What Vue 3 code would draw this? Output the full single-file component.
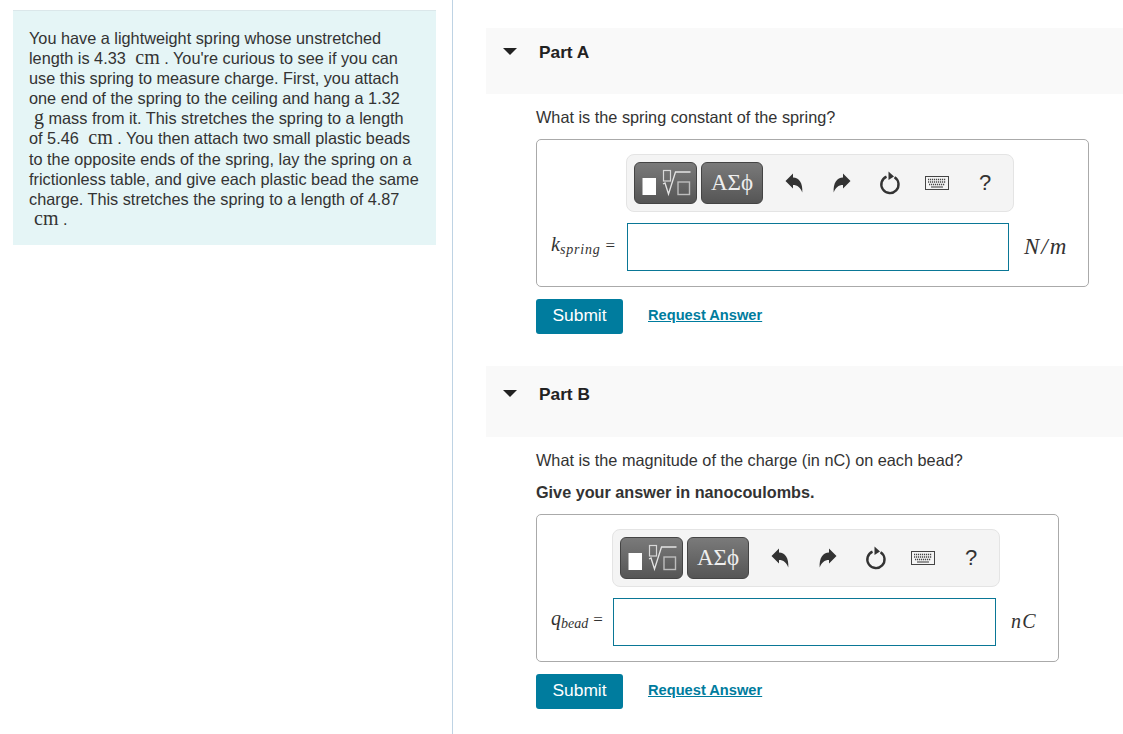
<script setup>
const parts = [
  {
    key: 'a', title: 'Part A', question: 'What is the spring constant of the spring?', hint: '',
    sym: 'k', sub: 'spring', unit: 'N/m'
  },
  {
    key: 'b', title: 'Part B', question: 'What is the magnitude of the charge (in nC) on each bead?',
    hint: 'Give your answer in nanocoulombs.', sym: 'q', sub: 'bead', unit: 'nC'
  }
]
</script>

<template>
  <div class="page">
    <aside class="left">
      <div class="card">
        You have a lightweight spring whose unstretched length is 4.33 <span class="u">cm</span> . You're curious to see if you can use this spring to measure charge. First, you attach one end of the spring to the ceiling and hang a 1.32<br /><span class="u">g</span> mass from it. This stretches the spring to a length of 5.46 <span class="u">cm</span> . You then attach two small plastic beads to the opposite ends of the spring, lay the spring on a frictionless table, and give each plastic bead the same charge. This stretches the spring to a length of 4.87 <span class="u">cm</span> .
      </div>
    </aside>
    <main class="right">
      <section v-for="p in parts" :key="p.key" class="part" :class="'part-' + p.key">
        <header class="head">
          <span class="tri"></span>
          <h2>{{ p.title }}</h2>
        </header>
        <div class="body">
          <p class="q">{{ p.question }}</p>
          <p v-if="p.hint" class="hint">{{ p.hint }}</p>
          <div class="box">
            <div class="toolbar">
              <button class="tb tb-1" type="button" aria-label="Templates">
                <svg width="61" height="40" viewBox="0 0 61 40">
                  <rect x="7.5" y="15" width="13.5" height="17" fill="#fff" />
                  <rect x="28.5" y="7.5" width="7" height="10.5" fill="none" stroke="#d8d8d8" stroke-width="1.2" />
                  <path d="M28 21 L30 20 L33.5 31 L40.5 9 H55.5" fill="none" stroke="#e4e4e4" stroke-width="1.3" />
                  <rect x="43" y="19" width="11.5" height="12.5" fill="none" stroke="#bdbdbd" stroke-width="1.4" />
                </svg>
              </button>
              <button class="tb tb-2" type="button">ΑΣϕ</button>
              <span class="slot">
                <svg width="18" height="20" viewBox="0 0 18 20"><path d="M0.5 8 L8 0.5 V4.5 C14 4.5 18 10 17.3 19.5 C15.5 14.5 12.5 12 8 12 V15.5 Z" fill="#333" /></svg>
              </span>
              <span class="slot">
                <svg width="18" height="20" viewBox="0 0 18 20"><path d="M17.5 8 L10 0.5 V4.5 C4 4.5 0 10 0.7 19.5 C2.5 14.5 5.5 12 10 12 V15.5 Z" fill="#333" /></svg>
              </span>
              <span class="slot">
                <svg width="22" height="24" viewBox="0 0 22 24">
                  <path d="M7.5 5.6 A8.6 8.6 0 1 0 15.5 6.2" fill="none" stroke="#333" stroke-width="2.4" />
                  <path d="M9.5 0.5 L15 5.5 L9.5 9 Z" fill="#333" />
                </svg>
              </span>
              <span class="slot kbd">
                <svg width="24" height="14" viewBox="0 0 24 14">
                  <rect x="0.5" y="0.5" width="23" height="13" fill="#f4f4f4" stroke="#444" />
                  <path d="M3 3.5 H21 M3 6 H21 M4 8.5 H20" stroke="#444" stroke-width="1.4" stroke-dasharray="1.2 0.8" fill="none" />
                  <path d="M6 11 H18" stroke="#555" stroke-width="1.2" fill="none" />
                </svg>
              </span>
              <span class="slot help">?</span>
            </div>
            <div class="label">
              <span class="sym">{{ p.sym }}</span><span class="sub">{{ p.sub }}</span><span class="eq">=</span>
            </div>
            <input class="field" type="text" />
            <div class="unit">{{ p.unit }}</div>
          </div>
          <div class="actions">
            <button class="submit" type="button">Submit</button>
            <a class="link" href="#">Request Answer</a>
          </div>
        </div>
      </section>
    </main>
  </div>
</template>

<style>
html, body { margin: 0; background: #fff; }
</style>

<style scoped>
.page {
  display: flex;
  width: 1123px;
  height: 734px;
  overflow: hidden;
  font-family: "Liberation Sans", Arial, sans-serif;
  font-size: 16.27px;
  color: #333;
  background: #fff;
}
.left {
  width: 452px;
  flex: none;
  box-sizing: content-box;
  border-right: 1px solid #bed3e4;
  padding-top: 10px;
}
.card {
  margin-left: 13px;
  width: 423px;
  height: 235px;
  box-sizing: border-box;
  padding: 17px 16px 0;
  background: #e5f5f6;
  border-top: 1px solid #dbe7ea;
  line-height: 20.1px;
}
.u {
  display: inline-block;
  margin-left: 5px;
  font-family: "Liberation Serif", "Times New Roman", serif;
  font-size: 20px;
  line-height: 18px;
}
.right {
  flex: 1;
  margin-left: 33px;
  padding-top: 28px;
  min-width: 0;
}
.part-b { margin-top: 32px; }
.head {
  display: flex;
  align-items: flex-start;
  background: #f9f9f9;
  box-sizing: border-box;
  padding-left: 17px;
}
.part-a .head { height: 66px; padding-top: 14px; }
.part-b .head { height: 71px; padding-top: 18px; }
.tri {
  width: 0;
  height: 0;
  margin-top: 6px;
  border-left: 7px solid transparent;
  border-right: 7px solid transparent;
  border-top: 7px solid #222;
}
h2 {
  margin: 0 0 0 22px;
  font-size: 17.3px;
  line-height: 20px;
  font-weight: 700;
  color: #222;
}
.body { padding-left: 50px; }
.q, .hint { margin: 0; line-height: 20px; }
.q { padding-top: 13px; }
.hint { margin-top: 12px; font-weight: 700; font-size: 16.23px; }
.box {
  display: grid;
  row-gap: 11px;
  margin-top: 12px;
  box-sizing: border-box;
  height: 148px;
  padding-top: 14px;
  border: 1px solid #aaa;
  border-radius: 5px;
}
.part-a .box { width: 553px; grid-template-columns: 90px 382px 1fr; grid-template-rows: 58px 48px; }
.part-b .box { width: 523px; grid-template-columns: 76px 383px 1fr; grid-template-rows: 58px 48px; }
.toolbar {
  grid-column: 2 / 4;
  justify-self: start;
  margin-left: -1px;
  width: 388px;
  height: 58px;
  box-sizing: border-box;
  display: flex;
  align-items: center;
  padding-left: 7px;
  background: #f4f4f4;
  border: 1px solid #e4e4e4;
  border-radius: 8px;
}
.tb {
  height: 42px;
  box-sizing: border-box;
  padding: 0;
  border: 1px solid #444;
  border-radius: 6px;
  background: linear-gradient(#7a7a7a, #555);
  display: flex;
  align-items: center;
  justify-content: center;
}
.tb-1 { width: 63px; margin-right: 4px; }
.tb-2 {
  width: 62px;
  margin-right: 7px;
  color: #eee;
  font-family: "Liberation Serif", "DejaVu Serif", serif;
  font-size: 23px;
}
.slot {
  width: 48px;
  height: 42px;
  flex: none;
  display: flex;
  align-items: center;
  justify-content: center;
}
.kbd { position: relative; left: -1px; }
.help { font-size: 22px; color: #333; position: relative; left: -1px; }
.label {
  grid-column: 1;
  grid-row: 2;
  align-self: center;
  padding-left: 14px;
  padding-bottom: 5px;
  font-family: "Liberation Serif", "Times New Roman", serif;
  font-style: italic;
  white-space: nowrap;
  color: #333;
}
.part-b .label { padding-bottom: 7px; }
.sym { font-size: 20px; }
.sub { font-size: 14px; position: relative; top: 3px; }
.part-a .sub { letter-spacing: 0.8px; }
.eq { font-style: normal; font-size: 17px; margin-left: 5px; }
.field {
  grid-column: 2;
  grid-row: 2;
  box-sizing: border-box;
  width: 100%;
  height: 48px;
  padding: 0;
  background: #fff;
  border: 1px solid #0a7796;
  outline: none;
}
.unit {
  grid-column: 3;
  grid-row: 2;
  align-self: center;
  padding-left: 15px;
  padding-bottom: 2px;
  font-family: "Liberation Serif", "Times New Roman", serif;
  font-style: italic;
  line-height: 1;
  color: #333;
}
.part-a .unit { font-size: 23px; letter-spacing: 2px; }
.part-b .unit { font-size: 20px; letter-spacing: 1.2px; padding-bottom: 3px; }
.actions {
  display: flex;
  align-items: center;
  margin-top: 12px;
}
.submit {
  width: 87px;
  height: 35px;
  padding: 0 0 2px;
  border: 0;
  border-radius: 3px;
  background: #007c9e;
  color: #fff;
  font-family: "Liberation Sans", Arial, sans-serif;
  font-size: 17.4px;
}
.link {
  margin-left: 25px;
  margin-top: -3px;
  color: #007c9e;
  font-size: 14.65px;
  font-weight: 700;
  text-decoration: underline;
}
</style>
